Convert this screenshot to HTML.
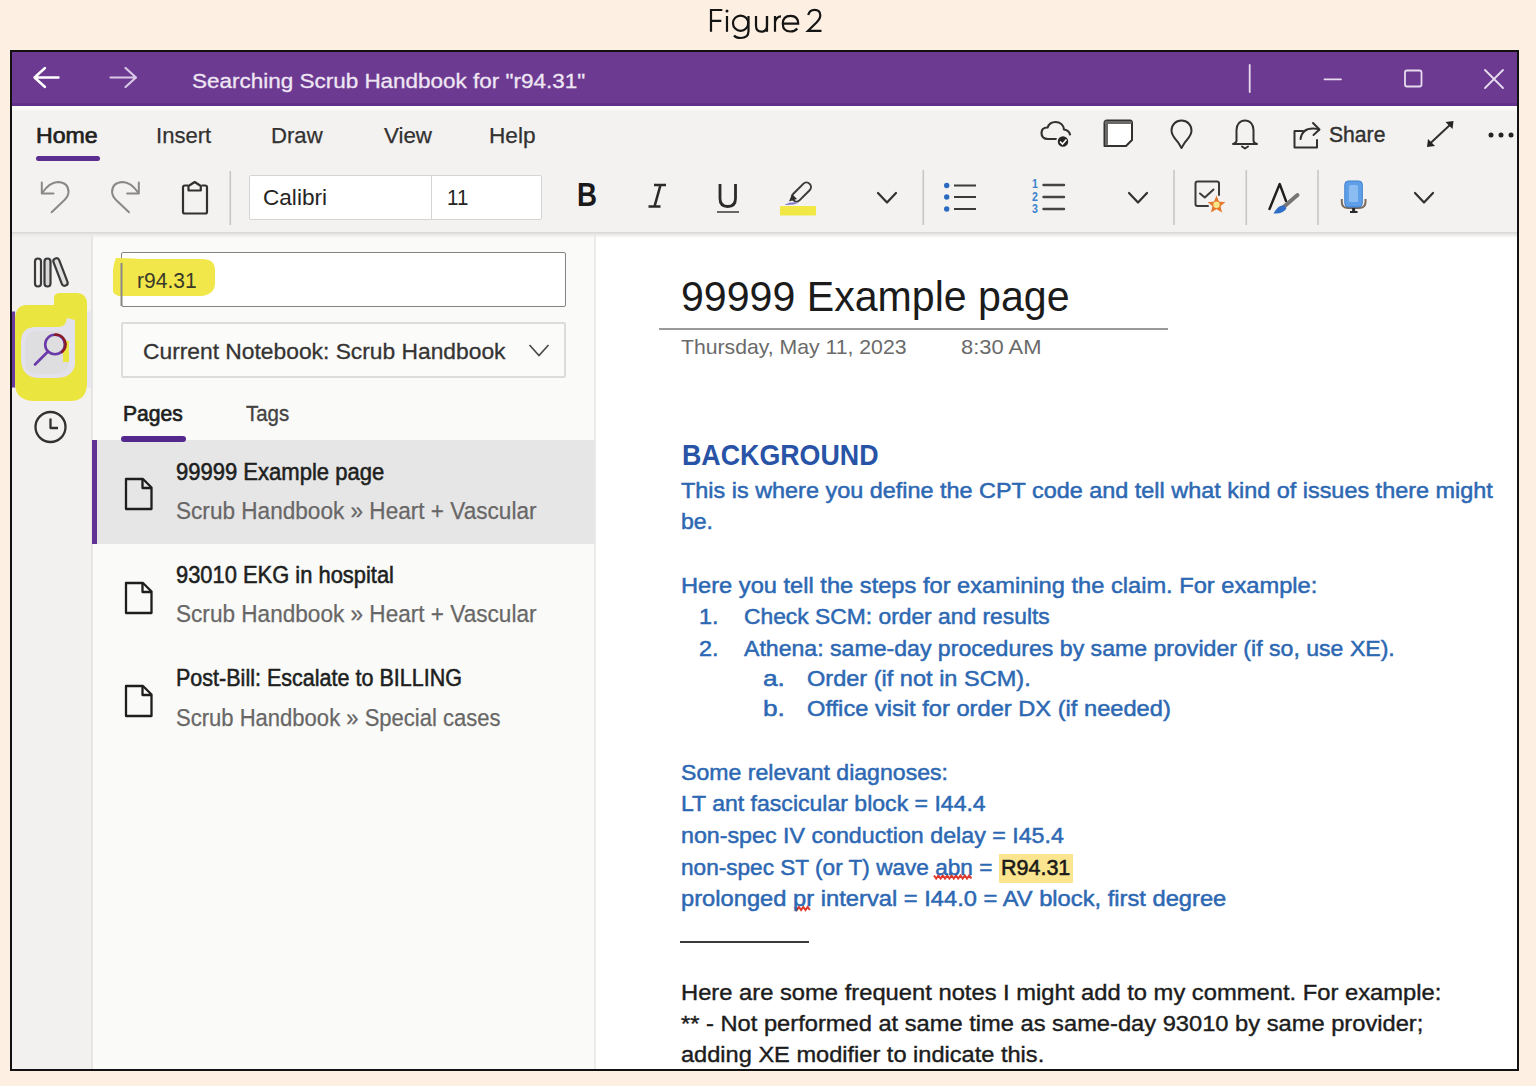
<!DOCTYPE html>
<html><head><meta charset="utf-8">
<style>
html,body{margin:0;padding:0;}
body{width:1536px;height:1086px;overflow:hidden;background:#fdf0e2;position:relative;font-family:"Liberation Sans",sans-serif;}
.a{position:absolute;}
.t{position:absolute;white-space:nowrap;transform-origin:0 0;font-family:"Liberation Sans",sans-serif;}
svg{position:absolute;left:0;top:0;}
</style></head>
<body>
<!-- window frame -->
<div class="a" style="left:10px;top:50px;width:1509px;height:1021px;background:#111;"></div>
<!-- title bar -->
<div class="a" style="left:12px;top:52px;width:1505px;height:54px;background:#6c3a91;"></div>
<div class="a" style="left:12px;top:102.5px;width:1505px;height:4px;background:linear-gradient(#65338d,#5c2d8a);"></div>
<!-- ribbon -->
<div class="a" style="left:12px;top:106px;width:1505px;height:127px;background:#f3f2f1;"></div>
<div class="a" style="left:12px;top:106px;width:1505px;height:5px;background:linear-gradient(#fdfdfc 60%,#f3f2f1);"></div>
<!-- left nav -->
<div class="a" style="left:12px;top:233px;width:80px;height:836px;background:#f2f1f0;"></div>
<!-- search pane -->
<div class="a" style="left:92px;top:233px;width:503px;height:836px;background:#fafaf9;"></div>
<div class="a" style="left:91px;top:233px;width:2px;height:836px;background:#e6e5e4;"></div>
<div class="a" style="left:594px;top:233px;width:2px;height:836px;background:#ecebea;"></div>
<!-- content -->
<div class="a" style="left:596px;top:233px;width:921px;height:836px;background:#ffffff;"></div>
<!-- ribbon shadow -->
<div class="a" style="left:12px;top:232px;width:1505px;height:6px;background:linear-gradient(#d6d5d4,#e9e8e7 40%,rgba(240,240,240,0));"></div>

<!-- search pane components -->
<div class="a" style="left:121px;top:252px;width:445px;height:55px;box-sizing:border-box;border:1.5px solid #858382;border-radius:2px;background:#fff;"></div>
<div class="a" style="left:121px;top:322px;width:445px;height:56px;box-sizing:border-box;border:2px solid #dedcdb;border-radius:2px;background:#fbfbfa;"></div>
<div class="a" style="left:92px;top:440px;width:503px;height:104px;background:#e6e6e6;"></div>
<div class="a" style="left:92px;top:440px;width:4.5px;height:104px;background:#5f3396;"></div>

<div class="a" style="left:121px;top:436px;width:65px;height:5.5px;background:#55288e;border-radius:3px;"></div>
<!-- content components -->
<div class="a" style="left:659px;top:328px;width:509px;height:2px;background:#9a9a9a;"></div>
<div class="a" style="left:999px;top:854px;width:74px;height:29px;background:#fbe58f;"></div>
<div class="a" style="left:680px;top:941px;width:129px;height:2px;background:#3a3a3a;"></div>

<!-- ribbon components -->
<div class="a" style="left:717px;top:211px;width:22px;height:2px;background:#6a6866;"></div>
<div class="a" style="left:36px;top:156px;width:64px;height:5px;background:#5c2e91;border-radius:3px;"></div>
<div class="a" style="left:249px;top:175px;width:293px;height:45px;box-sizing:border-box;border:1px solid #d6d4d2;border-radius:2px;background:#fff;"></div>
<div class="a" style="left:431px;top:175px;width:1px;height:45px;background:#d6d4d2;"></div>

<svg width="1536" height="1086" viewBox="0 0 1536 1086">
<!-- caption -->
<g fill="none" stroke="#141414" stroke-width="2.2" stroke-linecap="butt" stroke-linejoin="miter">
  <path d="M711 31.8V10H722.3M711 20.8H721.3"/>
  <path d="M727 16V31.8"/>
  <path d="M748.5 16V31Q748.5 38 740.5 38Q736 38 734 35.5"/>
  <circle cx="740.6" cy="23.2" r="7.6"/>
  <path d="M756 16V25.5Q756 31.6 761.5 31.6Q767 31.6 767 25.5V16"/>
  <path d="M767 16V31.8"/>
  <path d="M775 16V31.8M775 22Q776.5 16.3 781 16.3"/>
  <path d="M782.8 23.7H798.2Q798.2 15.9 790.5 15.9Q782.8 15.9 782.8 23.8Q782.8 31.5 790.5 31.5Q795 31.5 797.2 28.5"/>
  <path d="M808.2 15Q809.5 9.8 814.5 9.8Q820.3 9.8 820.3 15.2Q820.3 18.5 816.5 22.5L808 30.8H821.5"/>
</g>
<circle cx="727" cy="11" r="1.5" fill="#141414"/>
<!-- title bar icons -->
<g fill="none" stroke="#ffffff" stroke-width="2.4" stroke-linecap="round" stroke-linejoin="round">
  <path d="M58.5 77.5H35M45 68L34.5 77.5L45 87"/>
</g>
<g fill="none" stroke="#d9c9e6" stroke-width="2.2" stroke-linecap="round" stroke-linejoin="round">
  <path d="M110.5 77.5H135.5M125.5 68L136 77.5L125.5 87"/>
</g>
<g fill="none" stroke="#e7dcef" stroke-width="1.8" stroke-linecap="round">
  <path d="M1249.7 65V92"/>
  <path d="M1324.5 79.3H1341"/>
  <rect x="1405" y="70.5" width="16.5" height="16" rx="2"/>
  <path d="M1485 70L1503 88M1503 70L1485 88"/>
</g>

<!-- ribbon toolbar icons -->
<g fill="none" stroke="#8a8886" stroke-width="2" stroke-linecap="round" stroke-linejoin="round">
  <path d="M41.8 182.5V193.6H53.5"/>
  <path d="M42.5 192.5Q50 182 58 182Q68.5 182.5 68.5 192Q68.5 196 64 200.5L51.6 212.2"/>
  <path d="M 138.8 182.5 V 193.6 H 127.1"/>
  <path d="M 138.1 192.5 Q 130.6 182.0 122.6 182.0 Q 112.1 182.5 112.1 192.0 Q 112.1 196.0 116.6 200.5 L 129.0 212.2"/>
</g>
<g fill="none" stroke="#323130" stroke-width="2.2" stroke-linejoin="round">
  <path d="M188 185.5H184.8Q183 185.5 183 187.3V211.7Q183 213.5 184.8 213.5H205.2Q207 213.5 207 211.7V187.3Q207 185.5 205.2 185.5H201.5"/>
  <path d="M188.5 190.5V186L194.7 182L200.8 186V190.5Z"/>
</g>
<g stroke="#c8c6c4" stroke-width="1.6">
  <path d="M230.3 171V225M923.3 170V225M1174 170V225M1246.3 170V225M1318 170V225"/>
</g>
<!-- italic I / underline U -->
<g fill="none" stroke="#2a2a2a" stroke-width="2.6" stroke-linecap="butt">
  <path d="M654 185H666M648.5 206.5H660.5M660.5 185L654.5 206.5"/>
</g>
<g fill="none" stroke="#2a2a2a" stroke-width="2.8">
  <path d="M720 184V198.5Q720 206.5 727.7 206.5Q735.5 206.5 735.5 198.5V184"/>
</g>
<!-- highlighter -->
<rect x="790" y="187.5" width="23" height="9" rx="4.5" transform="rotate(-45 801.5 192)" fill="none" stroke="#3b3a39" stroke-width="2"/>
<path d="M789 201.5L792 194L797 199Z" fill="#2f2e2d"/>
<path d="M785 204.5Q790 201.5 799 202.5Q795 205 785 205Z" fill="#7f79c6"/>
<rect x="780" y="206" width="36" height="9.5" rx="1" fill="#f2e845"/>
<!-- chevrons -->
<g fill="none" stroke="#323130" stroke-width="2.2" stroke-linecap="round" stroke-linejoin="round">
  <path d="M878 193L887 202.5L896 193"/>
  <path d="M1129 193L1138 202.5L1147 193"/>
  <path d="M1415 193L1424 202.5L1433 193"/>
</g>
<!-- bullets -->
<g fill="#2a6ac0">
  <circle cx="946.7" cy="185.5" r="2.7"/><circle cx="946.7" cy="197" r="2.7"/><circle cx="946.7" cy="209" r="2.7"/>
</g>
<g stroke="#3b3a39" stroke-width="2">
  <path d="M954 185.5H976M954 197H976M954 209H976"/>
  <path d="M1043.5 185H1064M1043.5 197H1064M1043.5 209H1064" stroke="#454443" stroke-width="2.4" stroke-linecap="round"/>
</g>
<g fill="#3b82cc" font-family="Liberation Sans" font-weight="bold" font-size="12.5" transform="translate(1032 0) scale(0.85 1)">
  <text x="0" y="188.5">1</text><text x="0" y="201">2</text><text x="0" y="213.5">3</text>
</g>
<!-- checkbox star -->
<g fill="none" stroke="#3b3a39" stroke-width="2" stroke-linejoin="round" stroke-linecap="round">
  <path d="M1208 206H1197.5Q1195.5 206 1195.5 204V183.5Q1195.5 181.5 1197.5 181.5H1217Q1219 181.5 1219 183.5V195"/>
  <path d="M1200 193.5L1204.8 197.5L1213.5 189.5"/>
</g>
<path d="M1216.5 194.5L1219.3 201.2L1226.5 201.6L1221 206.3L1222.8 213.5L1216.5 209.6L1210.2 213.5L1212 206.3L1206.5 201.6L1213.7 201.2Z" fill="#e5762a" stroke="#f3f2f1" stroke-width="1"/>
<circle cx="1216.5" cy="204.8" r="3.2" fill="#fbe58a"/>
<!-- A brush -->
<g fill="none" stroke="#1f1e1d" stroke-width="2.4" stroke-linecap="round" stroke-linejoin="round">
  <path d="M1269.5 209L1279.7 184L1286 201"/>
</g>
<path d="M1297.5 195L1283 207.5" stroke="#777675" stroke-width="4" stroke-linecap="round"/>
<path d="M1283.5 205.5C1279 205 1276 209 1273.5 213.5C1280 214 1285 211.5 1286.5 208Z" fill="#2f6fc8"/>
<!-- mic -->
<path d="M1341.8 199V202Q1341.8 208 1348 208H1359Q1365.5 208 1365.5 202V199" fill="none" stroke="#7a6a5a" stroke-width="2"/>
<path d="M1353.6 208V211.5" stroke="#2a2a2a" stroke-width="3"/>
<path d="M1350 212H1357.5" stroke="#2a2a2a" stroke-width="2"/>
<rect x="1344.8" y="181" width="17.5" height="26" rx="3.5" fill="#5e9fe8" stroke="#3f7fd0" stroke-width="1"/>
<rect x="1349" y="185" width="9" height="17" rx="1.5" fill="#8cbdf2"/>
<!-- ribbon top-right icons -->
<g fill="none" stroke="#323130" stroke-width="2.2" stroke-linecap="round" stroke-linejoin="round">
  <path d="M1056 139H1048C1043.5 139 1041.5 136 1041.5 133C1041.5 129.5 1044 127.5 1047.5 127.5C1049 123.5 1052 122 1055.5 122C1060 122 1063.5 125 1064 129.5C1067 130 1069.5 132 1070 134.5"/>
  <path d="M1104.5 146V123Q1104.5 120.5 1107 120.5H1130Q1132 120.5 1132 123V140L1126 146Z" stroke-width="2" fill="#ffffff"/>
  <path d="M1106 122.5H1130.5M1106.5 122V144" stroke="#6a6968" stroke-width="3"/>
  <path d="M1181.5 120.5C1175.5 120.5 1171.5 125 1171.5 130.5C1171.5 136 1176 139.5 1178.5 143L1181.5 148L1184.5 143C1187 139.5 1191.5 136 1191.5 130.5C1191.5 125 1187.5 120.5 1181.5 120.5Z" stroke-width="2"/>
  <path d="M1245 120.5C1240 120.5 1236.5 124.5 1236.5 130V140.5Q1236.5 143 1233 144H1257Q1253.5 143 1253.5 140.5V130C1253.5 124.5 1250 120.5 1245 120.5Z" stroke-width="2"/>
  <path d="M1242 146.5L1245 148.5L1248 146.5" stroke-width="2"/>
  <path d="M1303 131H1294.5V147.5H1317V140" stroke-width="2"/>
  <path d="M1300.5 139C1301.5 132 1306 128.5 1313 128.5Q1318 128.5 1319 130" stroke-width="2"/>
  <path d="M1313 123L1319.5 129.5L1313.5 135" stroke-width="2"/>
  <path d="M1429 144.5L1451.5 123.5" stroke-width="2"/>
</g>
<path d="M1427 147L1428 139L1435 146Z" fill="#252423"/>
<path d="M1453.5 121L1452.5 129L1445.5 122Z" fill="#252423"/>
<circle cx="1063" cy="141.5" r="6" fill="#252423" stroke="#f3f2f1" stroke-width="1.5"/>
<path d="M1060 141.5L1062.5 144L1066.5 139.5" fill="none" stroke="#fff" stroke-width="1.6"/>
<g fill="#252423"><circle cx="1491" cy="135" r="2.5"/><circle cx="1501" cy="135" r="2.5"/><circle cx="1511" cy="135" r="2.5"/></g>

<!-- left nav -->
<rect x="12" y="311.5" width="79" height="76" fill="#e6e4ee"/>
<rect x="12" y="311.5" width="3" height="76" fill="#6a3a9c"/>
<path d="M27 305H54V297Q55 293 60 293H78Q87 294 87 304V383Q87 401 70 401H33Q15 400 15 383V318Q16 305 27 305Z" fill="#ebe53f"/>
<path d="M67 318L75 320V365Q72 378 56 378H38Q21 377 21 358V342Q21 327 36 327H58Q66 327 67 318Z" fill="#e3e1ec"/>
<path d="M25 345Q25 331 38 331H60V340Q64 344 63 350V362H69Q68 373 55 374H37Q25 373 25 360Z" fill="#dedddf"/>
<path d="M63 340L69 341V362L63 362Z" fill="#ebe53f"/>
<g fill="none" stroke-width="2.6" stroke-linecap="round">
  <circle cx="55" cy="344.5" r="9.8" stroke="#6a3aa8"/>
  <path d="M55 334.7A9.8 9.8 0 0 1 62 352" stroke="#8a1a2a"/>
  <path d="M48 351.5L35 364.5" stroke="#6a3aa8"/>
</g>
<g fill="none" stroke="#323130" stroke-width="2.3" stroke-linejoin="round">
  <rect x="35" y="258.5" width="6" height="28" rx="3" stroke="#3a3a3a" stroke-width="2.2"/>
  <rect x="44.5" y="258.5" width="6" height="28" rx="3" stroke="#3a3a3a" stroke-width="2.2" fill="#d8d8d8"/>
  <rect x="57.5" y="257.5" width="6" height="29" rx="3" stroke="#3a3a3a" stroke-width="2.2" fill="#e0e0e0" transform="rotate(-21 60.5 272)"/>
  <circle cx="50.5" cy="427" r="15"/>
  <path d="M50.5 418.5V428H58"/>
</g>

<!-- search highlight -->
<path d="M116 258Q114 262 113 270V292Q116 297 124 296H196Q214 297 215 284V270Q215 259 202 259H140Q126 258 116 258Z" fill="#f0e641" opacity="0.95"/>
<path d="M121.5 263V306" stroke="#8a8886" stroke-width="2"/>
<!-- dropdown chevron -->
<path d="M529.5 345L539 355.5L548.5 345" fill="none" stroke="#4a4846" stroke-width="1.6"/>

<!-- page doc icons -->
<g fill="none" stroke="#1f1e1d" stroke-width="2.3" stroke-linejoin="round">
  <path d="M126 479H143L151.5 487.5V509H126Z"/><path d="M142.5 479.5V488H151"/>
  <path d="M126 583H143L151.5 591.5V613H126Z"/><path d="M142.5 583.5V592H151"/>
  <path d="M126 686H143L151.5 694.5V716H126Z"/><path d="M142.5 686.5V695H151"/>
</g>

<!-- spelling squiggles -->
<g fill="none" stroke="#e03a2e" stroke-width="2">
<path d="M934.0 875.5 L936.2 878.5 L938.4 875.5 L940.6 878.5 L942.8 875.5 L945.0 878.5 L947.2 875.5 L949.4 878.5 L951.6 875.5 L953.8 878.5 L956.0 875.5 L958.2 878.5 L960.4 875.5 L962.6 878.5 L964.8 875.5 L967.0 878.5 L969.2 875.5 L971.4 878.5"/>
<path d="M794.5 907.0 L796.7 910.0 L798.9 907.0 L801.1 910.0 L803.3 907.0 L805.5 910.0 L807.7 907.0 L809.9 910.0"/>
</g>
</svg>

<div class="t" id="t0" style="left:191.5px;top:70.4px;font-size:21.08px;line-height:21.08px;color:#efe6f4;-webkit-text-stroke:0.3px currentColor;transform:scaleX(1.0661);">Searching Scrub Handbook for &quot;r94.31&quot;</div>
<div class="t" id="t1" style="left:35.8px;top:124.6px;font-size:22.24px;line-height:22.24px;color:#1f1e1d;-webkit-text-stroke:0.7px currentColor;transform:scaleX(1.0386);">Home</div>
<div class="t" id="t2" style="left:156.4px;top:124.6px;font-size:22.24px;line-height:22.24px;color:#323130;-webkit-text-stroke:0.25px currentColor;transform:scaleX(0.9926);">Insert</div>
<div class="t" id="t3" style="left:271.4px;top:124.6px;font-size:22.24px;line-height:22.24px;color:#323130;-webkit-text-stroke:0.25px currentColor;transform:scaleX(0.9944);">Draw</div>
<div class="t" id="t4" style="left:384.0px;top:124.6px;font-size:22.24px;line-height:22.24px;color:#323130;-webkit-text-stroke:0.25px currentColor;transform:scaleX(1.0042);">View</div>
<div class="t" id="t5" style="left:489.4px;top:124.6px;font-size:22.24px;line-height:22.24px;color:#323130;-webkit-text-stroke:0.25px currentColor;transform:scaleX(1.0189);">Help</div>
<div class="t" id="t6" style="left:1328.8px;top:124.1px;font-size:22.53px;line-height:22.53px;color:#323130;-webkit-text-stroke:0.25px currentColor;-webkit-text-stroke:0.4px currentColor;transform:scaleX(0.9385);">Share</div>
<div class="t" id="t7" style="left:577.4px;top:179.3px;font-size:32.70px;line-height:32.70px;color:#1a1a1a;font-weight:bold;transform:scaleX(0.8471);">B</div>
<div class="t" id="t8" style="left:262.6px;top:186.9px;font-size:22.24px;line-height:22.24px;color:#252423;transform:scaleX(1.0156);">Calibri</div>
<div class="t" id="t9" style="left:447.0px;top:186.9px;font-size:22.24px;line-height:22.24px;color:#252423;transform:scaleX(0.9223);">11</div>
<div class="t" id="t10" style="left:136.5px;top:269.4px;font-size:22.97px;line-height:22.97px;color:#3a3a2a;transform:scaleX(0.9165);">r94.31</div>
<div class="t" id="t11" style="left:142.5px;top:340.1px;font-size:22.97px;line-height:22.97px;color:#353433;-webkit-text-stroke:0.3px currentColor;transform:scaleX(0.9927);">Current Notebook: Scrub Handbook</div>
<div class="t" id="t12" style="left:123.2px;top:403.2px;font-size:22.24px;line-height:22.24px;color:#201f1e;-webkit-text-stroke:0.7px currentColor;transform:scaleX(0.9485);">Pages</div>
<div class="t" id="t13" style="left:246.0px;top:403.2px;font-size:22.24px;line-height:22.24px;color:#444342;-webkit-text-stroke:0.35px currentColor;transform:scaleX(0.9198);">Tags</div>
<div class="t" id="t14" style="left:176.2px;top:460.4px;font-size:23.84px;line-height:23.84px;color:#201f1e;-webkit-text-stroke:0.55px currentColor;transform:scaleX(0.9244);">99999 Example page</div>
<div class="t" id="t15" style="left:176.2px;top:500.1px;font-size:23.55px;line-height:23.55px;color:#686766;-webkit-text-stroke:0.25px currentColor;transform:scaleX(0.9591);">Scrub Handbook » Heart + Vascular</div>
<div class="t" id="t16" style="left:176.2px;top:563.0px;font-size:23.84px;line-height:23.84px;color:#201f1e;-webkit-text-stroke:0.55px currentColor;transform:scaleX(0.9193);">93010 EKG in hospital</div>
<div class="t" id="t17" style="left:176.2px;top:602.9px;font-size:23.55px;line-height:23.55px;color:#686766;-webkit-text-stroke:0.25px currentColor;transform:scaleX(0.9591);">Scrub Handbook » Heart + Vascular</div>
<div class="t" id="t18" style="left:176.2px;top:665.8px;font-size:23.84px;line-height:23.84px;color:#201f1e;-webkit-text-stroke:0.55px currentColor;transform:scaleX(0.9036);">Post-Bill: Escalate to BILLING</div>
<div class="t" id="t19" style="left:176.2px;top:706.6px;font-size:23.55px;line-height:23.55px;color:#686766;-webkit-text-stroke:0.25px currentColor;transform:scaleX(0.9358);">Scrub Handbook » Special cases</div>
<div class="t" id="t20" style="left:681.0px;top:276.1px;font-size:42.15px;line-height:42.15px;color:#1b1b1b;transform:scaleX(0.9756);">99999 Example page</div>
<div class="t" id="t21" style="left:681.0px;top:337.3px;font-size:20.64px;line-height:20.64px;color:#6a6a6a;transform:scaleX(1.0280);">Thursday, May 11, 2023</div>
<div class="t" id="t22" style="left:961.0px;top:337.3px;font-size:20.64px;line-height:20.64px;color:#6a6a6a;transform:scaleX(1.0638);">8:30 AM</div>
<div class="t" id="t23" style="left:681.5px;top:440.3px;font-size:29.80px;line-height:29.80px;color:#2853a6;font-weight:bold;transform:scaleX(0.8992);">BACKGROUND</div>
<div class="t" id="t24" style="left:681.0px;top:479.9px;font-size:22.53px;line-height:22.53px;color:#2d68b3;-webkit-text-stroke:0.5px currentColor;transform:scaleX(1.0400);">This is where you define the CPT code and tell what kind of issues there might</div>
<div class="t" id="t25" style="left:681.0px;top:511.2px;font-size:22.53px;line-height:22.53px;color:#2d68b3;-webkit-text-stroke:0.5px currentColor;transform:scaleX(1.0220);">be.</div>
<div class="t" id="t26" style="left:680.7px;top:575.1px;font-size:22.53px;line-height:22.53px;color:#2d68b3;-webkit-text-stroke:0.5px currentColor;transform:scaleX(1.0505);">Here you tell the steps for examining the claim. For example:</div>
<div class="t" id="t27" style="left:699.3px;top:605.9px;font-size:22.53px;line-height:22.53px;color:#2d68b3;-webkit-text-stroke:0.5px currentColor;transform:scaleX(1.0383);">1.</div>
<div class="t" id="t28" style="left:744.2px;top:605.9px;font-size:22.53px;line-height:22.53px;color:#2d68b3;-webkit-text-stroke:0.5px currentColor;transform:scaleX(1.0137);">Check SCM: order and results</div>
<div class="t" id="t29" style="left:699.3px;top:637.6px;font-size:22.53px;line-height:22.53px;color:#2d68b3;-webkit-text-stroke:0.5px currentColor;transform:scaleX(1.0383);">2.</div>
<div class="t" id="t30" style="left:744.2px;top:637.6px;font-size:22.53px;line-height:22.53px;color:#2d68b3;-webkit-text-stroke:0.5px currentColor;transform:scaleX(1.0257);">Athena: same-day procedures by same provider (if so, use XE).</div>
<div class="t" id="t31" style="left:762.8px;top:667.9px;font-size:22.53px;line-height:22.53px;color:#2d68b3;-webkit-text-stroke:0.5px currentColor;transform:scaleX(1.1661);">a.</div>
<div class="t" id="t32" style="left:806.7px;top:667.9px;font-size:22.53px;line-height:22.53px;color:#2d68b3;-webkit-text-stroke:0.5px currentColor;transform:scaleX(1.0456);">Order (if not in SCM).</div>
<div class="t" id="t33" style="left:762.8px;top:698.1px;font-size:22.53px;line-height:22.53px;color:#2d68b3;-webkit-text-stroke:0.5px currentColor;transform:scaleX(1.1661);">b.</div>
<div class="t" id="t34" style="left:806.7px;top:698.1px;font-size:22.53px;line-height:22.53px;color:#2d68b3;-webkit-text-stroke:0.5px currentColor;transform:scaleX(1.0508);">Office visit for order DX (if needed)</div>
<div class="t" id="t35" style="left:680.6px;top:762.3px;font-size:22.53px;line-height:22.53px;color:#2d68b3;-webkit-text-stroke:0.5px currentColor;transform:scaleX(1.0256);">Some relevant diagnoses:</div>
<div class="t" id="t36" style="left:680.6px;top:793.3px;font-size:22.53px;line-height:22.53px;color:#2d68b3;-webkit-text-stroke:0.5px currentColor;transform:scaleX(1.0236);">LT ant fascicular block = I44.4</div>
<div class="t" id="t37" style="left:680.6px;top:824.6px;font-size:22.53px;line-height:22.53px;color:#2d68b3;-webkit-text-stroke:0.5px currentColor;transform:scaleX(1.0317);">non-spec IV conduction delay = I45.4</div>
<div class="t" id="t38" style="left:680.6px;top:856.7px;font-size:22.53px;line-height:22.53px;color:#2d68b3;-webkit-text-stroke:0.5px currentColor;transform:scaleX(1.0040);">non-spec ST (or T) wave abn =</div>
<div class="t" id="t39" style="left:1001.0px;top:856.4px;font-size:22.97px;line-height:22.97px;color:#1a1a1a;-webkit-text-stroke:0.6px currentColor;transform:scaleX(0.9355);">R94.31</div>
<div class="t" id="t40" style="left:680.6px;top:887.7px;font-size:22.53px;line-height:22.53px;color:#2d68b3;-webkit-text-stroke:0.5px currentColor;transform:scaleX(1.0532);">prolonged pr interval = I44.0 = AV block, first degree</div>
<div class="t" id="t41" style="left:681.3px;top:981.8px;font-size:22.53px;line-height:22.53px;color:#1c1c1c;-webkit-text-stroke:0.4px currentColor;transform:scaleX(1.0548);">Here are some frequent notes I might add to my comment. For example:</div>
<div class="t" id="t42" style="left:681.3px;top:1012.6px;font-size:22.53px;line-height:22.53px;color:#1c1c1c;-webkit-text-stroke:0.4px currentColor;transform:scaleX(1.0517);">** - Not performed at same time as same-day 93010 by same provider;</div>
<div class="t" id="t43" style="left:681.3px;top:1043.5px;font-size:22.53px;line-height:22.53px;color:#1c1c1c;-webkit-text-stroke:0.4px currentColor;transform:scaleX(1.0476);">adding XE modifier to indicate this.</div>
</body></html>
